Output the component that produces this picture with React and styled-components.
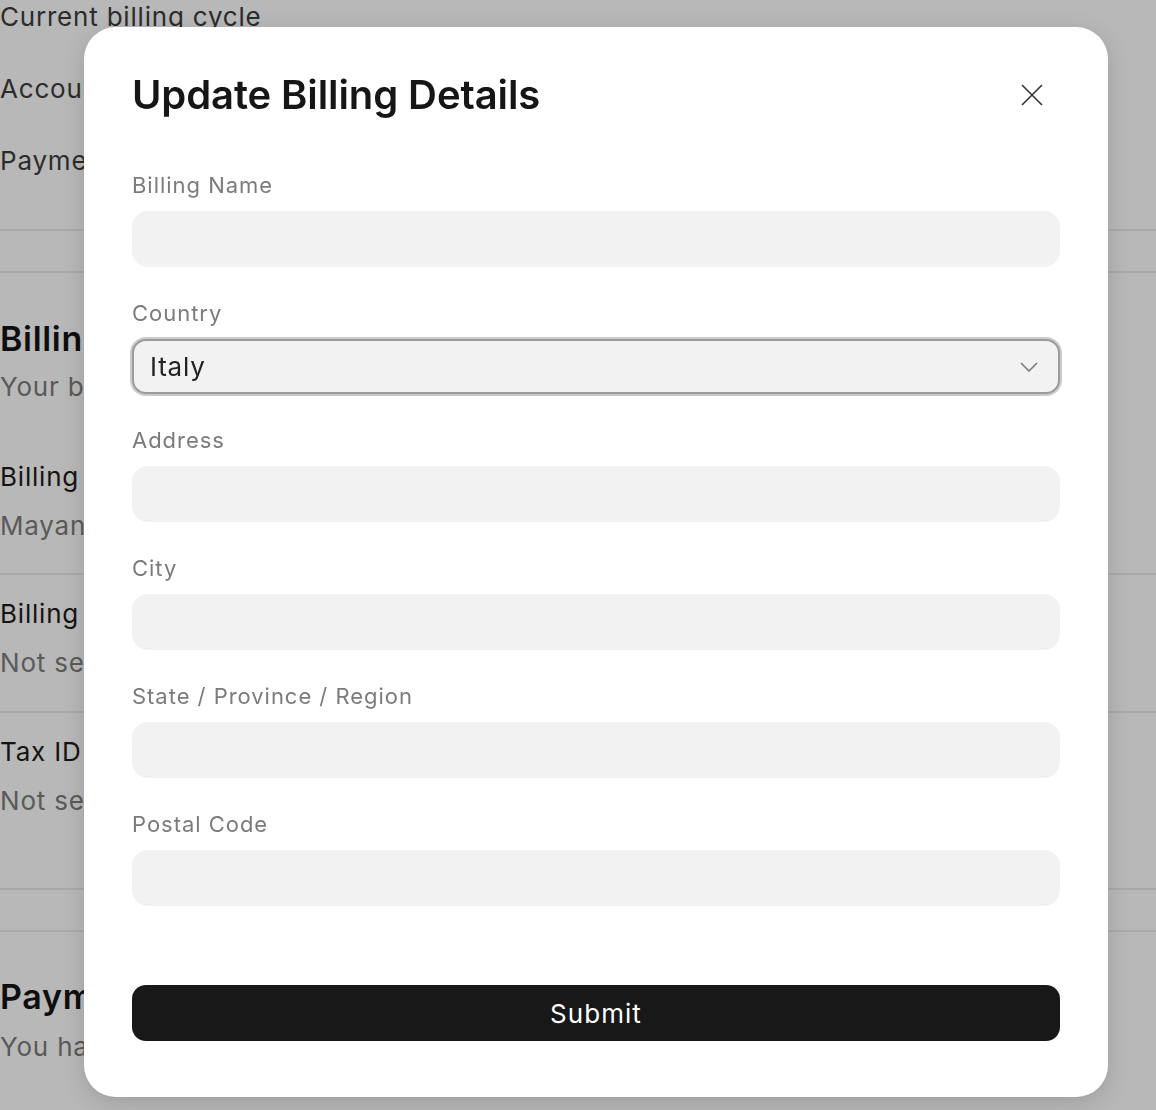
import React from "react";
import styled, { createGlobalStyle } from "styled-components";

const GlobalStyle = createGlobalStyle`
  html, body {
    margin: 0;
    padding: 0;
    background: #b8b8b8;
    font-family: Inter, "Noto Sans", "Liberation Sans", sans-serif;
    letter-spacing: 0.05em;
  }
  * { box-sizing: border-box; }
`;

// the page behind the dialog, dimmed
const Page = styled.div`
  height: 1110px;
  overflow: hidden;
  margin-top: -1px;
  color: #161616;
`;

const InfoRow = styled.div`
  height: 72px;
  font-size: 26px;
  line-height: 36px;
  color: #2c2c2c;
  white-space: nowrap;
`;

const Divider = styled.div`
  height: 2px;
  background: #a9a9a9;
  margin-top: ${p => p.$top || 0}px;
`;

const SectionTitle = styled.h2`
  margin: ${p => p.$top}px 0 0;
  font-size: 34px;
  line-height: 44px;
  font-weight: 600;
  letter-spacing: 0.02em;
  color: #0e0e0e;
  white-space: nowrap;
`;

const SectionSub = styled.p`
  margin: ${p => p.$top}px 0 0;
  font-size: 26px;
  line-height: 36px;
  color: #595959;
  white-space: nowrap;
`;

const BgField = styled.div`
  padding-top: ${p => p.$top}px;
  padding-bottom: ${p => p.$bottom}px;
`;

const BgLabel = styled.div`
  font-size: 26px;
  line-height: 36px;
  color: #141414;
  white-space: nowrap;
`;

const BgValue = styled.div`
  margin-top: 13px;
  font-size: 26px;
  line-height: 36px;
  color: #5a5a5a;
  white-space: nowrap;
`;

// dialog
const Overlay = styled.div`
  position: fixed;
  inset: 0;
  padding: 27px 0 0 84px;
`;

const Modal = styled.div`
  width: 1024px;
  background: #fff;
  border-radius: 32px;
  padding: 44px 48px 56px;
  box-shadow: 0 6px 24px rgba(0, 0, 0, 0.14);
`;

const Header = styled.div`
  display: flex;
  align-items: center;
  justify-content: space-between;
  height: 48px;
`;

const Title = styled.h1`
  margin: 0;
  font-size: 40px;
  line-height: 48px;
  font-weight: 600;
  color: #161616;
  letter-spacing: -0.1px;
`;

const CloseButton = styled.button`
  width: 56px;
  height: 48px;
  border: 0;
  background: none;
  padding: 0;
  display: flex;
  align-items: center;
  justify-content: center;
  color: #333;
  cursor: pointer;
`;

const Form = styled.form`
  margin-top: 52px;
  display: flex;
  flex-direction: column;
  gap: 32px;
`;

const Field = styled.label`
  display: flex;
  flex-direction: column;
  gap: 12px;
`;

const Label = styled.span`
  font-size: 22px;
  line-height: 28px;
  letter-spacing: 0.044em;
  color: #7b7b7b;
`;

const Input = styled.input`
  height: 56px;
  border: 0;
  border-radius: 16px;
  background: #f2f2f2;
  padding: 0 18px;
  font-family: inherit;
  font-size: 24px;
  outline: none;
`;

const SelectWrap = styled.div`
  position: relative;
`;

const Select = styled.select`
  appearance: none;
  width: 100%;
  height: 55px;
  border: 2px solid #9b9b9b;
  border-radius: 14px;
  box-shadow: 0 0 0 2px #cbcbcb;
  background: #f2f2f2;
  padding: 0 16px;
  font-family: inherit;
  font-size: 26px;
  letter-spacing: 0.03em;
  color: #222;
  outline: none;
`;

const Chevron = styled.svg`
  position: absolute;
  right: 22px;
  top: 50%;
  transform: translateY(-50%);
  pointer-events: none;
`;

const Submit = styled.button`
  margin-top: 47px;
  height: 56px;
  border: 0;
  border-radius: 14px;
  background: #181818;
  color: #fff;
  font-family: inherit;
  font-size: 26px;
  letter-spacing: 0.04em;
  cursor: pointer;
`;

const fields = ["Address", "City", "State / Province / Region", "Postal Code"];

export default function App() {
  return (
    <>
      <GlobalStyle />
      <Page>
        <InfoRow>Current billing cycle</InfoRow>
        <InfoRow>Account status</InfoRow>
        <InfoRow>Payment method</InfoRow>
        <Divider $top={14} />
        <Divider $top={40} />
        <SectionTitle $top={44}>Billing Details</SectionTitle>
        <SectionSub $top={8}>Your billing information</SectionSub>
        <BgField $top={54} $bottom={29}>
          <BgLabel>Billing Name</BgLabel>
          <BgValue>Mayank</BgValue>
        </BgField>
        <Divider />
        <BgField $top={21} $bottom={30}>
          <BgLabel>Billing Address</BgLabel>
          <BgValue>Not set</BgValue>
        </BgField>
        <Divider />
        <BgField $top={21} $bottom={69}>
          <BgLabel>Tax ID</BgLabel>
          <BgValue>Not set</BgValue>
        </BgField>
        <Divider />
        <Divider $top={40} />
        <SectionTitle $top={43}>Payment Methods</SectionTitle>
        <SectionSub $top={10}>You have no payment methods</SectionSub>
      </Page>

      <Overlay>
        <Modal>
          <Header>
            <Title>Update Billing Details</Title>
            <CloseButton type="button" aria-label="Close">
              <svg width="24" height="24" viewBox="0 0 24 24" fill="none" stroke="currentColor" strokeWidth="1.6">
                <path d="M2 2 L22 22 M22 2 L2 22" />
              </svg>
            </CloseButton>
          </Header>
          <Form onSubmit={e => e.preventDefault()}>
            <Field>
              <Label>Billing Name</Label>
              <Input type="text" />
            </Field>
            <Field as="div">
              <Label>Country</Label>
              <SelectWrap>
                <Select defaultValue="Italy">
                  <option>Italy</option>
                  <option>France</option>
                  <option>Germany</option>
                </Select>
                <Chevron width="18" height="10" viewBox="0 0 18 10" fill="none" stroke="#7a7a7a" strokeWidth="1.6">
                  <path d="M1 1 L9 9 L17 1" />
                </Chevron>
              </SelectWrap>
            </Field>
            {fields.map(f => (
              <Field key={f}>
                <Label>{f}</Label>
                <Input type="text" />
              </Field>
            ))}
            <Submit type="submit">Submit</Submit>
          </Form>
        </Modal>
      </Overlay>
    </>
  );
}
